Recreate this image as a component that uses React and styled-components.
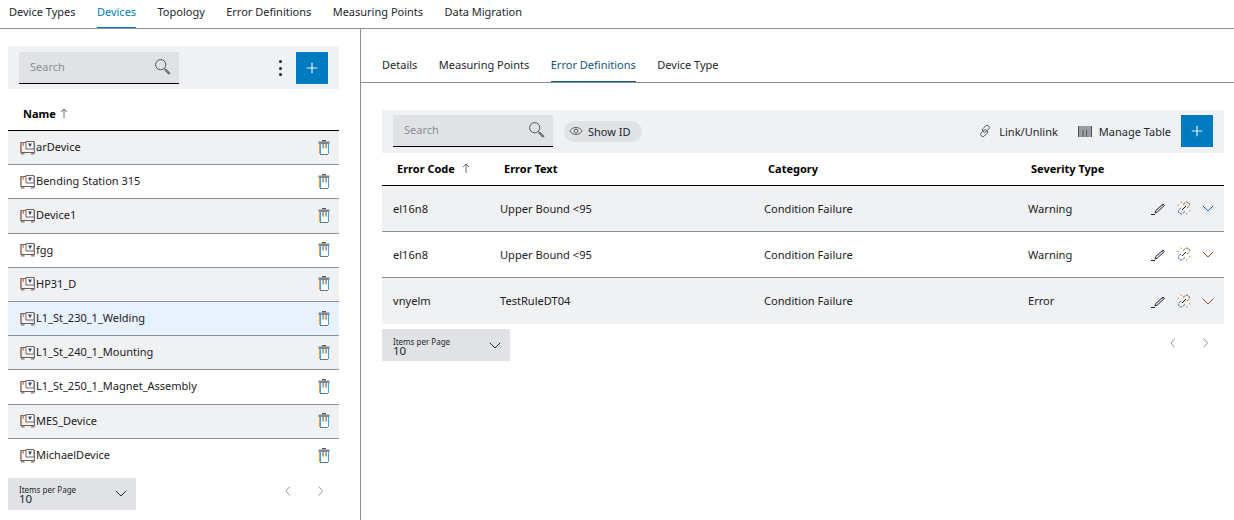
import React from "react";
import styled, { createGlobalStyle } from "styled-components";

const Global = createGlobalStyle`
  html, body { margin: 0; padding: 0; background: #fff; }
  body { font-family: "Noto Sans", "Liberation Sans", sans-serif; font-size: 12px; color: #1c2024; }
`;

const Page = styled.div`
  width: 1234px;
  height: 520px;
  display: flex;
  flex-direction: column;
  overflow: hidden;
`;
const TopNav = styled.nav`
  height: 29px;
  box-sizing: border-box;
  flex: none;
  display: flex;
  gap: 21.4px;
  padding-left: 9px;
  border-bottom: 1px solid #8a9097;
`;
const Tab = styled.div`
  height: 100%;
  box-sizing: border-box;
  display: flex;
  align-items: center;
  padding-bottom: 4px;
  font-size: 11px;
  white-space: nowrap;
  color: ${(p) => (p.$active ? p.$color : "#23272b")};
  border-bottom: 1px solid ${(p) => (p.$active ? p.$color : "transparent")};
  margin-bottom: -1px;
`;
const Main = styled.div`
  flex: 1;
  display: flex;
  min-height: 0;
`;
const LeftPane = styled.aside`
  width: 361px;
  flex: none;
  box-sizing: border-box;
  border-right: 1px solid #8a9097;
  padding: 17px 21px 0 8px;
`;
const RightPane = styled.section`
  flex: 1;
  display: flex;
  flex-direction: column;
`;
const Toolbar = styled.div`
  height: 43px;
  box-sizing: border-box;
  background: #eff1f2;
  display: flex;
  align-items: center;
  padding: ${(p) => p.$pt}px 11px ${(p) => p.$pb}px;
`;
const SearchBox = styled.div`
  width: 160px;
  height: 32px;
  box-sizing: border-box;
  flex: none;
  background: #e0e2e5;
  border-bottom: 1px solid #000;
  display: flex;
  align-items: center;
  justify-content: space-between;
  padding: 0 8px 2px 11px;
  font-size: 11px;
  color: #8a9097;
`;
const AddButton = styled.button`
  width: 32px;
  height: 32px;
  flex: none;
  border: 0;
  padding: 0;
  background: #007bc0;
  display: flex;
  align-items: center;
  justify-content: center;
`;
const MoreButton = styled.div`
  margin-left: auto;
  margin-right: 14.5px;
  display: flex;
  flex-direction: column;
  gap: 3.2px;
  & > i { width: 3px; height: 3px; border-radius: 50%; background: #1c2024; }
`;
const NameHead = styled.div`
  height: 42px;
  box-sizing: border-box;
  border-bottom: 1px solid #000;
  display: flex;
  align-items: center;
  gap: 4px;
  padding: 7px 0 0 15px;
  font-weight: 700;
  font-size: 11px;
  color: #000;
`;
const DeviceRow = styled.div`
  height: 34.2px;
  box-sizing: border-box;
  display: flex;
  align-items: center;
  padding: 0 9px 0 12px;
  font-size: 11px;
  color: #1c2024;
  background: ${(p) => (p.$selected ? "#e8f1ff" : p.$shade ? "#eff1f2" : "#fff")};
  border-bottom: ${(p) => (p.$last ? "0" : "1px solid #8a9097")};
`;
const DeviceName = styled.span`
  flex: 1;
  padding-bottom: 2px;
  white-space: nowrap;
`;
const Pager = styled.div`
  display: flex;
  align-items: center;
  justify-content: space-between;
  margin-top: ${(p) => p.$top}px;
`;
const PageSelect = styled.div`
  width: 128px;
  height: 32px;
  box-sizing: border-box;
  background: #e0e2e5;
  padding: 2px 9px 0 11px;
  display: flex;
  justify-content: space-between;
  align-items: center;
`;
const PageLabel = styled.div`
  font-size: 8px;
  line-height: 9px;
  color: #23272b;
`;
const PageValue = styled.div`
  font-size: 11.5px;
  line-height: 10px;
  color: #23272b;
`;
const PageArrows = styled.div`
  display: flex;
  gap: 20px;
  padding: 0 12px 5px 0;
`;
const ChevronSlot = styled.div`
  margin-bottom: 3px;
`;
const SubTabs = styled.div`
  height: 54px;
  flex: none;
  box-sizing: border-box;
  padding: 22px 0 0 21px;
  display: flex;
  gap: 21.5px;
  border-bottom: 1px solid #8a9097;
`;
const RightBody = styled.div`
  padding: 27px 10px 0 21px;
`;
const Chip = styled.div`
  margin-left: 11px;
  height: 21px;
  padding: 0 11px 0 5px;
  border-radius: 11px;
  background: #e0e2e5;
  display: flex;
  align-items: center;
  gap: 5px;
  font-size: 11px;
  color: #23272b;
`;
const ToolAction = styled.div`
  display: flex;
  align-items: center;
  gap: 7px;
  font-size: 11px;
  color: #23272b;
  margin-right: ${(p) => p.$gap}px;
  margin-left: ${(p) => (p.$push ? "auto" : "0")};
`;
const TableGrid = styled.div`
  display: grid;
  align-items: center;
  height: ${(p) => p.$h}px;
  box-sizing: border-box;
  padding-left: ${(p) => p.$pl}px;
`;
const HeadRow = styled(TableGrid)`
  border-bottom: 1px solid #000;
  font-weight: 700;
  font-size: 11px;
  color: #000;
  padding-bottom: 2px;
  grid-template-columns: 107px 264px 263px 120px 1fr;
`;
const HeadCell = styled.div`
  display: flex;
  align-items: center;
  gap: 7px;
`;
const BodyRow = styled(TableGrid)`
  grid-template-columns: 107px 264px 264px 120px 1fr;
  font-size: 11.1px;
  color: #1c2024;
  padding-bottom: 1px;
  background: ${(p) => (p.$shade ? "#eff1f2" : "#fff")};
  border-bottom: ${(p) => (p.$last ? "0" : "1px solid #8a9097")};
`;
const RowActions = styled.div`
  display: flex;
  justify-content: flex-end;
  align-items: center;
  gap: 10px;
  padding-right: 10px;
`;

const Stroke = ({ size = 16, children, color = "#23272b", w = 1 }) => (
  <svg width={size} height={size} viewBox="0 0 16 16" fill="none" stroke={color} strokeWidth={w} style={{ flex: "none", display: "block" }}>
    {children}
  </svg>
);
const SearchIcon = () => (
  <Stroke size={17} color="#4a4f55" w={0.9}>
    <circle cx="6.300" cy="6.300" r="4.800" />
    <path d="M9.800 9.800l1.200 1.200" />
    <path d="M11 10.300l4 4-1 1-4-4z" fill="#8a9097" />
  </Stroke>
);
const Plus = () => (
  <Stroke size={14} color="#e8f4fb" w={1.300}>
    <path d="M8 2v12M2 8h12" />
  </Stroke>
);
const UpArrow = () => (
  <svg width="8" height="10" viewBox="0 0 8 10" fill="none" stroke="#6a7076" style={{ flex: "none", display: "block" }}>
    <path d="M4 10V1M1 4l3-3 3 3" />
  </svg>
);
const Down = ({ color = "#23272b", size = 12 }) => (
  <Stroke size={size} color={color} w={1.300}>
    <path d="M1 5l7 7 7-7" />
  </Stroke>
);
const Left = () => (
  <Stroke size={12} color="#6f757b">
    <path d="M9 2L4 8l5 6" />
  </Stroke>
);
const Right = () => (
  <Stroke size={12} color="#6f757b">
    <path d="M5 2l5 6-5 6" />
  </Stroke>
);
const DeviceIcon = () => (
  <svg width="15" height="15" viewBox="0 0 15 15" fill="none" style={{ flex: "none", marginRight: 1, marginBottom: 1 }}>
    <path d="M1 2.500h13.500v10H1z" stroke="#6a5f5a" strokeWidth="1.200" />
    <path d="M1 13.800h3.500M11 13.800h3.500" stroke="#85705f" strokeWidth="1.300" />
    <path d="M6 1.500h8v7.500H6z" fill="#fff" stroke="#7a5f58" />
    <path d="M8 3.500h4L10 7.200z" fill="#274f80" />
    <path d="M3.200 2v3.800" stroke="#b8704a" strokeWidth="1.200" />
    <path d="M.6 3v9" stroke="#c08060" />
    <path d="M14.700 3v9" stroke="#5f8fc4" strokeWidth="0.700" />
  </svg>
);
const Trash = () => (
  <svg width="12" height="15" viewBox="0 0 12 15" fill="none" style={{ flex: "none", display: "block", marginBottom: 1 }}>
    <path d="M4 0h4v1.500H4z" fill="#565b61" />
    <path d="M.5 1.500h11v2.500H.5z" fill="#84888e" />
    <path d="M1 4h10v10.500H1z" fill="#fff" />
    <path d="M1.500 4v10" stroke="#ee9c3c" />
    <path d="M2.500 4v10M10.500 4v10" stroke="#3f9fe6" />
    <path d="M4.500 4v4.500M7.500 4v4.500" stroke="#ecaa5a" />
    <path d="M5.500 4v4.500M8.500 4v4.500" stroke="#62acea" />
    <path d="M2 14.500h8" stroke="#71767c" />
  </svg>
);
const Pencil = () => (
  <Stroke size={16}>
    <path d="M1 14.500h4" />
    <path d="M5 13l.6-2.300L13 4l1.500 1.400-7.300 6.700z" stroke="#23272b" />
    <path d="M12 5l1.500 1.400" stroke="#3f7fc4" />
    <path d="M6.500 10.500l6-5.500" stroke="#7a4fa0" strokeWidth="0.6" />
  </Stroke>
);
const Broken = () => (
  <Stroke size={16}>
    <path d="M7 4.500L9 2.800c1.300-1 2.700-.9 3.700 0s1.100 2.400 0 3.700L11.300 8" stroke="#8a5a20" strokeDasharray="2.500 1" />
    <path d="M9 11.500L7 13.200c-1.300 1-2.700.9-3.700 0s-1.100-2.400 0-3.700L4.700 8" stroke="#2d5f9e" strokeDasharray="2.500 1" />
    <path d="M6 10l4-4" stroke="#23272b" />
    <path d="M1.500 5l1.500.5M14.500 11l-1.500-.5M5 1.500l.5 1.500M11 14.500l-.5-1.500" stroke="#c9873f" />
  </Stroke>
);
const LinkIcon = () => (
  <Stroke size={14} color="#4a4f55">
    <rect x="6.500" y="1" width="5" height="9" rx="2.500" transform="rotate(45 9 5.500)" />
    <rect x="4.500" y="6" width="5" height="9" rx="2.500" transform="rotate(45 7 10.500)" />
  </Stroke>
);
const TableIcon = () => (
  <svg width="14" height="11" viewBox="0 0 14 11" style={{ flex: "none" }}>
    <rect width="14" height="11" fill="#9a9da1" />
    <path d="M.5 0v11M13.500 0v11" stroke="#4a4f55" fill="none" />
    <path d="M5 4v7M8.500 4v7" stroke="#5c6167" fill="none" />
  </svg>
);
const Eye = () => (
  <Stroke size={14} color="#4a4f55">
    <path d="M1 8c2-3 4.200-4 7-4s5 1 7 4c-2 3-4.200 4-7 4s-5-1-7-4z" />
    <circle cx="8" cy="8" r="2.200" />
  </Stroke>
);

const devices = ["arDevice", "Bending Station 315", "Device1", "fgg", "HP31_D", "L1_St_230_1_Welding", "L1_St_240_1_Mounting", "L1_St_250_1_Magnet_Assembly", "MES_Device", "MichaelDevice"];
const errors = [
  ["el16n8", "Upper Bound <95", "Condition Failure", "Warning", "#0f5f9e"],
  ["el16n8", "Upper Bound <95", "Condition Failure", "Warning", "#7a4a2a"],
  ["vnyelm", "TestRuleDT04", "Condition Failure", "Error", "#7a4a2a"],
];
const topTabs = ["Device Types", "Devices", "Topology", "Error Definitions", "Measuring Points", "Data Migration"];
const subTabs = ["Details", "Measuring Points", "Error Definitions", "Device Type"];

const PageControl = ({ top }) => (
  <Pager $top={top}>
    <PageSelect>
      <div>
        <PageLabel>Items per Page</PageLabel>
        <PageValue>10</PageValue>
      </div>
      <ChevronSlot><Down /></ChevronSlot>
    </PageSelect>
    <PageArrows>
      <Left />
      <Right />
    </PageArrows>
  </Pager>
);

export default function App() {
  return (
    <Page>
      <Global />
      <TopNav>
        {topTabs.map((t) => (
          <Tab key={t} $active={t === "Devices"} $color="#007bc0">{t}</Tab>
        ))}
      </TopNav>
      <Main>
        <LeftPane>
          <Toolbar $pt={1} $pb={0}>
            <SearchBox>Search<SearchIcon /></SearchBox>
            <MoreButton><i /><i /><i /></MoreButton>
            <AddButton><Plus /></AddButton>
          </Toolbar>
          <NameHead>Name <UpArrow /></NameHead>
          {devices.map((d, i) => (
            <DeviceRow key={d} $shade={i === 0 || i === 2 || i === 4 || i === 6 || i === 8} $selected={i === 5} $last={i === 9}>
              <DeviceIcon />
              <DeviceName>{d}</DeviceName>
              <Trash />
            </DeviceRow>
          ))}
          <PageControl top={5} />
        </LeftPane>
        <RightPane>
          <SubTabs>
            {subTabs.map((t) => (
              <Tab key={t} $active={t === "Error Definitions"} $color="#13557f">{t}</Tab>
            ))}
          </SubTabs>
          <RightBody>
            <Toolbar $pt={0} $pb={1}>
              <SearchBox>Search<SearchIcon /></SearchBox>
              <Chip><Eye />Show ID</Chip>
              <ToolAction $push $gap={20}><LinkIcon />Link/Unlink</ToolAction>
              <ToolAction $gap={10}><TableIcon />Manage Table</ToolAction>
              <AddButton><Plus /></AddButton>
            </Toolbar>
            <HeadRow $h={33} $pl={15}>
              <HeadCell>Error Code <UpArrow /></HeadCell>
              <div>Error Text</div>
              <div>Category</div>
              <div>Severity Type</div>
            </HeadRow>
            {errors.map((r, i) => (
              <BodyRow key={i} $h={46} $pl={11} $shade={i !== 1} $last={i === 2}>
                <div>{r[0]}</div>
                <div>{r[1]}</div>
                <div>{r[2]}</div>
                <div>{r[3]}</div>
                <RowActions>
                  <Pencil />
                  <Broken />
                  <Down color={r[4]} size={12} />
                </RowActions>
              </BodyRow>
            ))}
            <PageControl top={5} />
          </RightBody>
        </RightPane>
      </Main>
    </Page>
  );
}
